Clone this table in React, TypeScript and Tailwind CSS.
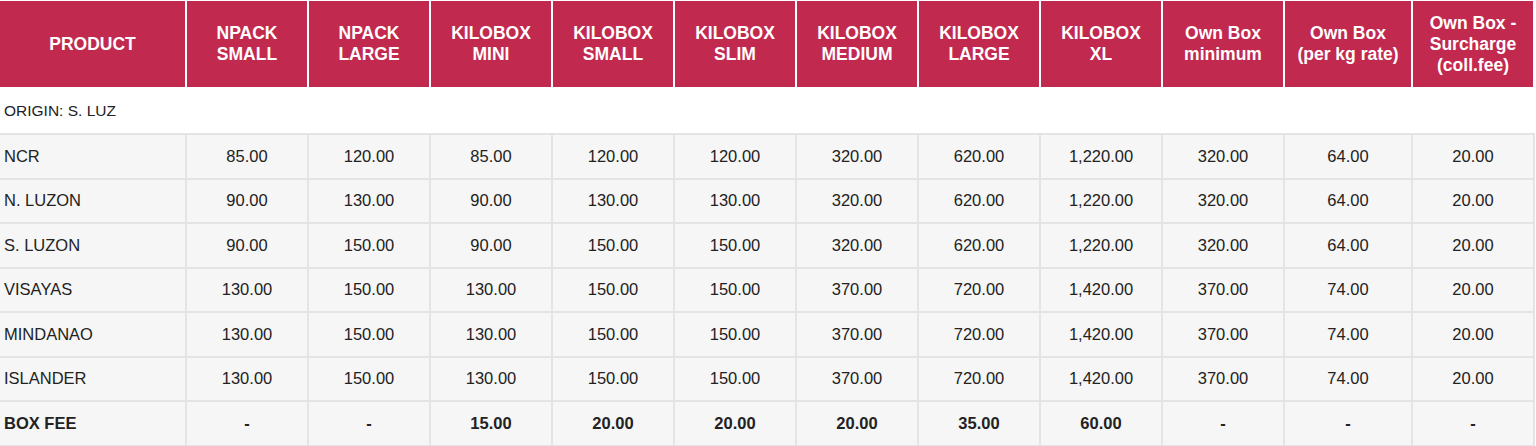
const headers = [
  "PRODUCT",
  "NPACK SMALL",
  "NPACK LARGE",
  "KILOBOX MINI",
  "KILOBOX SMALL",
  "KILOBOX SLIM",
  "KILOBOX MEDIUM",
  "KILOBOX LARGE",
  "KILOBOX XL",
  "Own Box minimum",
  "Own Box (per kg rate)",
  "Own Box - Surcharge (coll.fee)",
];

const widths = [186, 122, 122, 122, 122, 122, 122, 122, 122, 122, 128, 122];

const rows: [string, string[]][] = [
  ["NCR", ["85.00", "120.00", "85.00", "120.00", "120.00", "320.00", "620.00", "1,220.00", "320.00", "64.00", "20.00"]],
  ["N. LUZON", ["90.00", "130.00", "90.00", "130.00", "130.00", "320.00", "620.00", "1,220.00", "320.00", "64.00", "20.00"]],
  ["S. LUZON", ["90.00", "150.00", "90.00", "150.00", "150.00", "320.00", "620.00", "1,220.00", "320.00", "64.00", "20.00"]],
  ["VISAYAS", ["130.00", "150.00", "130.00", "150.00", "150.00", "370.00", "720.00", "1,420.00", "370.00", "74.00", "20.00"]],
  ["MINDANAO", ["130.00", "150.00", "130.00", "150.00", "150.00", "370.00", "720.00", "1,420.00", "370.00", "74.00", "20.00"]],
  ["ISLANDER", ["130.00", "150.00", "130.00", "150.00", "150.00", "370.00", "720.00", "1,420.00", "370.00", "74.00", "20.00"]],
];

const boxFee = ["-", "-", "15.00", "20.00", "20.00", "20.00", "35.00", "60.00", "-", "-", "-"];

export default function App() {
  return (
    <div className="bg-white w-[1536px] h-[446px] overflow-hidden pt-px" style={{ fontFamily: '"Liberation Sans", Arial, sans-serif' }}>
      <table className="table-fixed border-collapse w-[1535px] text-[#222]">
        <colgroup>
          {widths.map((w, i) => (
            <col key={i} style={{ width: w }} />
          ))}
        </colgroup>
        <thead>
          <tr className="h-[87px]">
            {headers.map((h) => (
              <th
                key={h}
                className="bg-[#c2294f] text-white font-bold text-[17.5px] leading-[21px] px-3 border-2 border-white border-t-0 first:border-l-0 text-center align-middle"
              >
                {h}
              </th>
            ))}
          </tr>
        </thead>
        <tbody>
          <tr className="h-[46px]">
            <td colSpan={12} className="px-1 text-[15.5px] text-[#222] align-middle border-b-2 border-[#e4e4e4]">
              ORIGIN: S. LUZ
            </td>
          </tr>
          {rows.map(([name, vals]) => (
            <tr key={name} className="h-[44.5px]">
              <td className="bg-[#f6f6f6] border-2 border-l-0 border-[#e4e4e4] px-1 text-[16.5px]">{name}</td>
              {vals.map((v, i) => (
                <td key={i} className="bg-[#f6f6f6] border-2 border-[#e4e4e4] text-center text-[16.5px]">
                  {v}
                </td>
              ))}
            </tr>
          ))}
          <tr className="h-[44.5px] font-bold">
            <td className="bg-[#f6f6f6] border-2 border-l-0 border-[#e4e4e4] px-1 text-[16.5px]">BOX FEE</td>
            {boxFee.map((v, i) => (
              <td key={i} className="bg-[#f6f6f6] border-2 border-[#e4e4e4] text-center text-[16.5px]">
                {v}
              </td>
            ))}
          </tr>
        </tbody>
      </table>
    </div>
  );
}
